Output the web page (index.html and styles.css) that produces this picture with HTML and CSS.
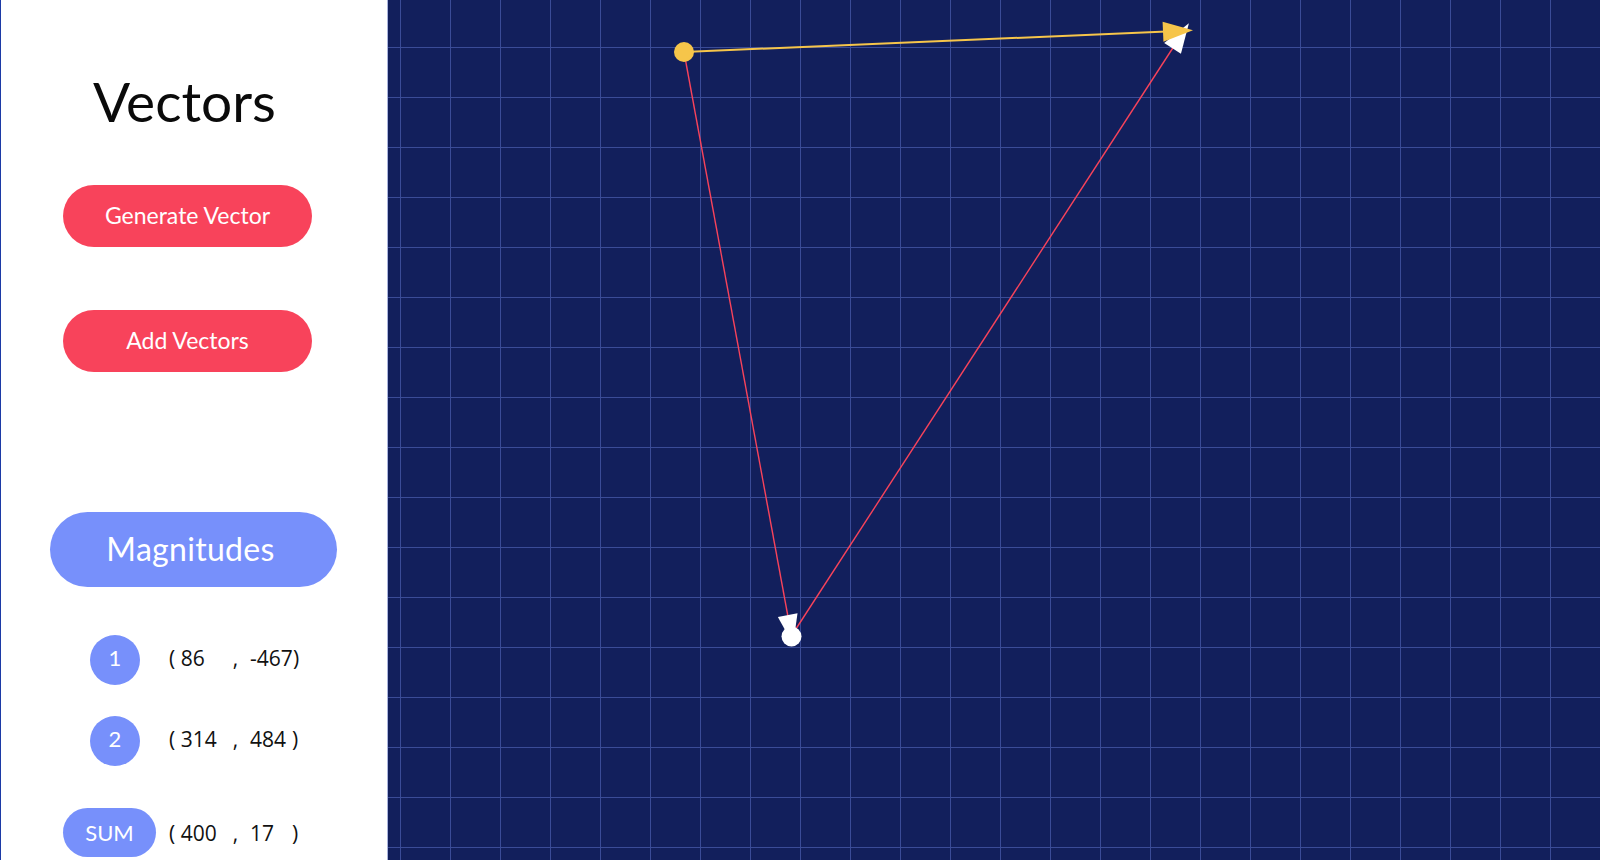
FILE: index.html
```html
<!DOCTYPE html>
<html lang="en">
<head>
<meta charset="utf-8">
<title>Vectors</title>
<link rel="stylesheet" href="styles.css">
</head>
<body>
<div class="app">
  <aside class="sidebar">
    <h1 class="title">Vectors</h1>
    <button class="btn btn-red btn-gen">Generate Vector</button>
    <button class="btn btn-red btn-add">Add Vectors</button>
    <div class="mag-header">Magnitudes</div>
    <ul class="mag-list">
      <li class="mag-row"><span class="badge circle">1</span><span class="coords">(&nbsp;<span class="v1">86</span>,<span class="v2">-467</span>)</span></li>
      <li class="mag-row row-2"><span class="badge circle">2</span><span class="coords">(&nbsp;<span class="v1">314</span>,<span class="v2">484</span>)</span></li>
      <li class="mag-row row-sum"><span class="badge pill">SUM</span><span class="coords">(&nbsp;<span class="v1">400</span>,<span class="v2">17</span>)</span></li>
    </ul>
  </aside>
  <main class="canvas">
    <svg class="plot" width="1212" height="860" viewBox="0 0 1212 860" xmlns="http://www.w3.org/2000/svg">
      <line x1="296" y1="52" x2="403.5" y2="635.75" stroke="#f8435b" stroke-width="1.4"/>
      <polygon points="389.87,616.91 409.53,613.29 405.13,644.60" fill="#ffffff"/>
      <line x1="403.5" y1="635.75" x2="796" y2="30.75" stroke="#f8435b" stroke-width="1.4"/>
      <polygon points="792.96,53.81 776.18,42.93 800.90,23.20" fill="#ffffff"/>
      <circle cx="403.5" cy="636.5" r="10" fill="#ffffff"/>
      <line x1="296" y1="52" x2="796" y2="30.75" stroke="#f6c54a" stroke-width="2"/>
      <polygon points="775.44,41.63 774.60,21.65 804.99,30.37" fill="#f6c54a"/>
      <circle cx="296" cy="52" r="10" fill="#f6c54a"/>
    </svg>
  </main>
</div>
</body>
</html>
```

FILE: styles.css
```css
html, body {
  margin: 0;
  padding: 0;
  height: 100%;
  overflow: hidden;
}

body {
  font-family: "Lato", "Noto Sans", sans-serif;
  background: #ffffff;
}

.app {
  display: flex;
  width: 1600px;
  height: 860px;
}

.sidebar {
  flex: 0 0 386px;
  border-left: 1px solid #1c3aa6;
  background: #ffffff;
  display: flex;
  flex-direction: column;
  align-items: flex-start;
}

.title {
  margin: 74px 0 0 92px;
  font-size: 55px;
  line-height: 55px;
  font-weight: 400;
  color: #0a0a0a;
}

.btn {
  border: none;
  padding: 0 0 3px 0;
  font-family: "Lato", "Noto Sans", sans-serif;
  color: #ffffff;
  cursor: pointer;
}

.btn-red {
  width: 249px;
  height: 62px;
  border-radius: 31px;
  background: #f8435b;
  font-size: 23px;
  margin-left: 62px;
}

.btn-gen {
  margin-top: 56px;
}

.btn-add {
  margin-top: 63px;
}

.mag-header {
  margin: 140px 0 0 49px;
  width: 287px;
  height: 75px;
  box-sizing: border-box;
  padding: 0 6px 3px 0;
  border-radius: 38px;
  background: #7790fb;
  color: #ffffff;
  font-size: 32px;
  letter-spacing: 0.3px;
  display: flex;
  align-items: center;
  justify-content: center;
}

.mag-list {
  list-style: none;
  margin: 48px 0 0 0;
  padding: 0;
}

.mag-row {
  display: flex;
  align-items: center;
}

.row-2 {
  margin-top: 31px;
}

.row-sum {
  margin-top: 42px;
}

.badge {
  background: #7790fb;
  color: #ffffff;
  font-size: 22px;
  display: flex;
  align-items: center;
  justify-content: center;
  box-sizing: border-box;
}

.circle {
  width: 50px;
  height: 50px;
  padding-bottom: 5px;
  border-radius: 50%;
  margin: 0 29px 0 89px;
}

.pill {
  width: 93px;
  height: 49px;
  border-radius: 25px;
  margin: 0 13px 0 62px;
}

.coords {
  font-family: "Open Sans", "Noto Sans", sans-serif;
  font-size: 21px;
  color: #111111;
  white-space: nowrap;
  padding-bottom: 4px;
}

.row-sum .coords {
  padding-bottom: 0;
}

.v1 {
  display: inline-block;
  width: 52px;
}

.v2 {
  display: inline-block;
  min-width: 42px;
  margin-left: 12px;
}

.canvas {
  flex: 1 1 auto;
  border-left: 1px solid #aab4dd;
  background-color: #121f5c;
  background-image:
    linear-gradient(to right, #3a4b97 1px, transparent 1px),
    linear-gradient(to bottom, #3a4b97 1px, transparent 1px);
  background-size: 50px 50px;
  background-position: 12px 47px;
  overflow: hidden;
}

.plot {
  display: block;
}
```
